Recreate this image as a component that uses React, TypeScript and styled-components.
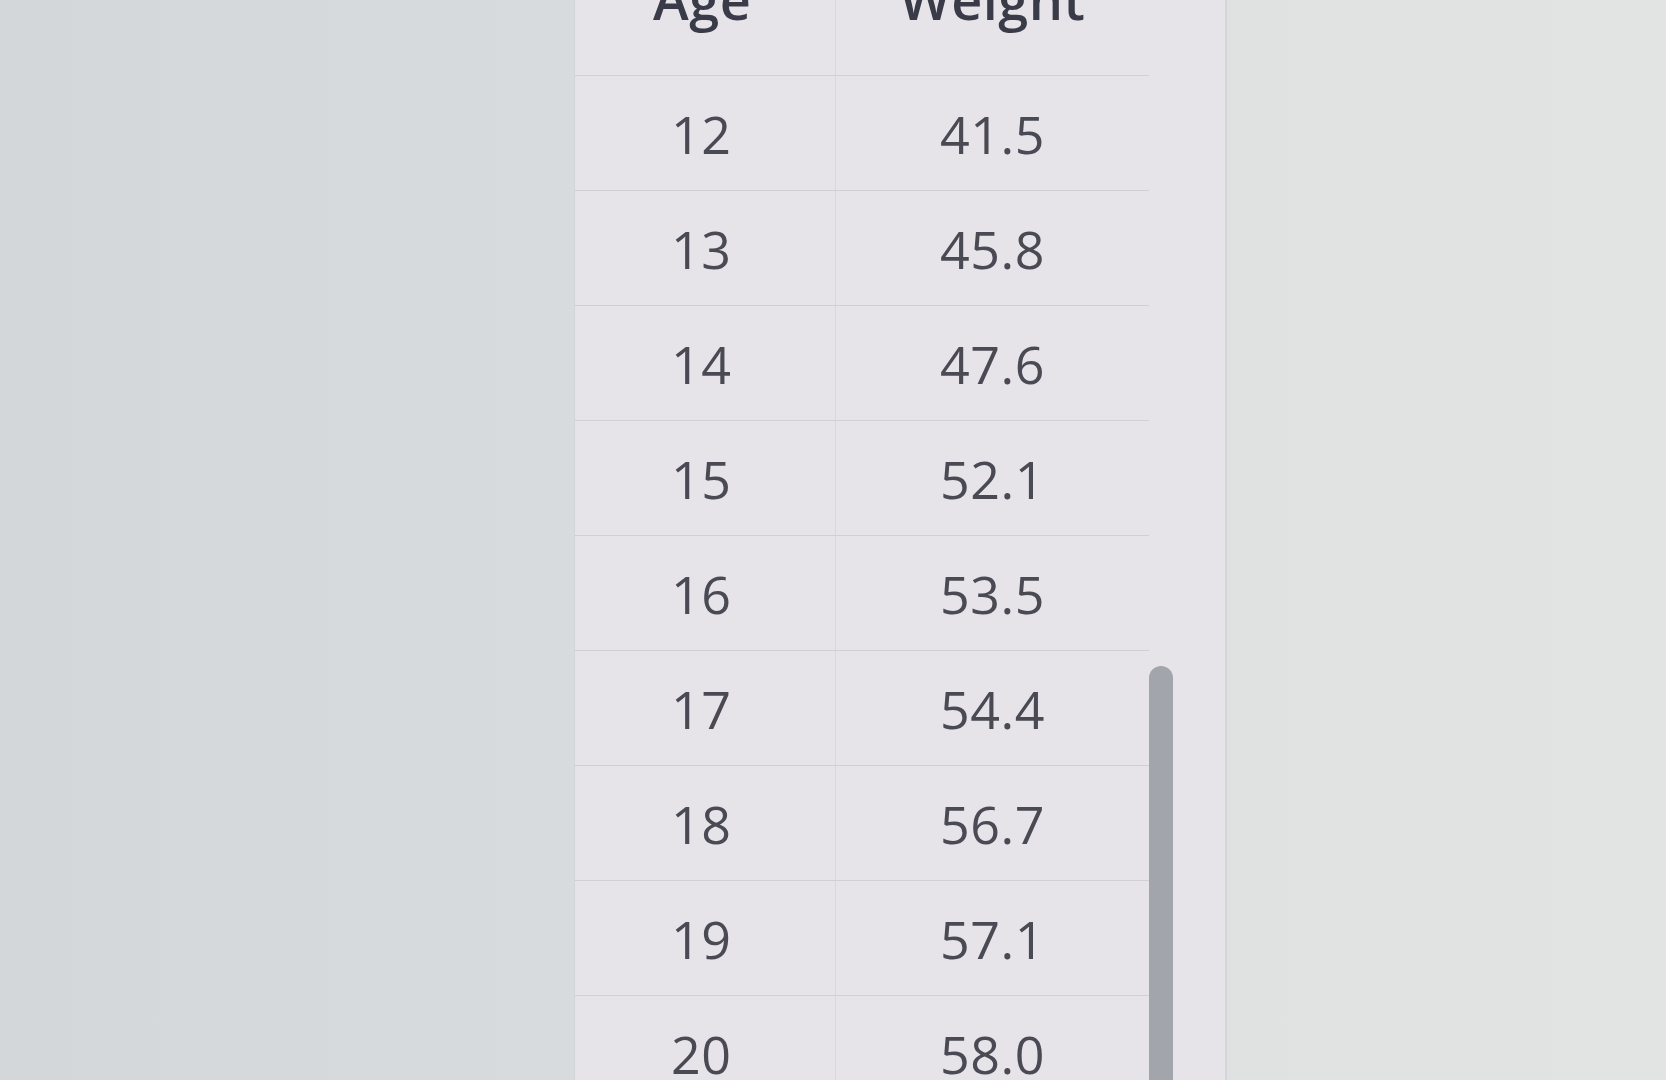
import styled, { createGlobalStyle } from "styled-components";

const GlobalStyle = createGlobalStyle`
    html, body {
        margin: 0;
        padding: 0;
        height: 100%;
        overflow: hidden;
    }

    body {
        background: linear-gradient(90deg, #d3d7da 0%, #d9dcde 40%, #e0e2e2 75%, #e2e4e3 100%);
        font-family: "Open Sans", "Noto Sans", sans-serif;
    }
`;

const rows = [
    { age: 12, weight: "41.5" },
    { age: 13, weight: "45.8" },
    { age: 14, weight: "47.6" },
    { age: 15, weight: "52.1" },
    { age: 16, weight: "53.5" },
    { age: 17, weight: "54.4" },
    { age: 18, weight: "56.7" },
    { age: 19, weight: "57.1" },
    { age: 20, weight: "58.0" },
];

const Page = styled.div`
    width: 100%;
    height: 1080px;
    display: flex;
    flex-direction: row;
    padding-left: 574px;
    box-sizing: border-box;
    overflow: hidden;
`;

const Panel = styled.div`
    width: 650px;
    height: 1200px;
    margin-top: -52px;

    display: flex;
    flex-direction: row;

    background-color: #e6e4e9;
    border-left: 1px solid #d2d3d8;
    border-right: 2px solid #d4d5da;
`;

const Table = styled.div`
    width: 574px;
    display: flex;
    flex-direction: column;
`;

const Row = styled.div<{ $header?: boolean }>`
    height: ${ p => p.$header ? "128px" : "115px" };
    flex-shrink: 0;
    display: grid;
    grid-template-columns: 260px 1fr;
    border-bottom: 1px solid #cfcfd5;
    box-sizing: border-box;
`;

const Cell = styled.div<{ $header?: boolean; $center?: boolean }>`
    display: flex;
    align-items: center;
    justify-content: ${ p => p.$center ? "center" : "flex-start" };
    padding-left: ${ p => p.$center ? "0" : p.$header ? "78px" : "96px" };
    padding-bottom: ${ p => p.$header ? "26px" : "0" };

    font-size: ${ p => p.$header ? "54px" : "52px" };
    font-weight: ${ p => p.$header ? 600 : 400 };
    color: ${ p => p.$header ? "#3a3b48" : "#4a4a54" };
    letter-spacing: 0.5px;

    & + & {
        border-left: 1px solid #d9d8de;
    }
`;

const ScrollTrack = styled.div`
    width: 26px;
    display: flex;
    flex-direction: column;
    padding-top: 718px;
    align-items: flex-start;
`;

const ScrollThumb = styled.div`
    width: 24px;
    height: 500px;
    border-radius: 12px;
    background-color: #a2a5ac;
`;

function App() {
    return (
        <Page>
            <GlobalStyle />
            <Panel>
                <Table>
                    <Row $header>
                        <Cell $header>Age</Cell>
                        <Cell $header $center>Weight</Cell>
                    </Row>
                    { rows.map(r => (
                        <Row key={ r.age }>
                            <Cell>{ r.age }</Cell>
                            <Cell $center>{ r.weight }</Cell>
                        </Row>
                    )) }
                </Table>
                <ScrollTrack>
                    <ScrollThumb />
                </ScrollTrack>
            </Panel>
        </Page>
    );
}

export default App;
